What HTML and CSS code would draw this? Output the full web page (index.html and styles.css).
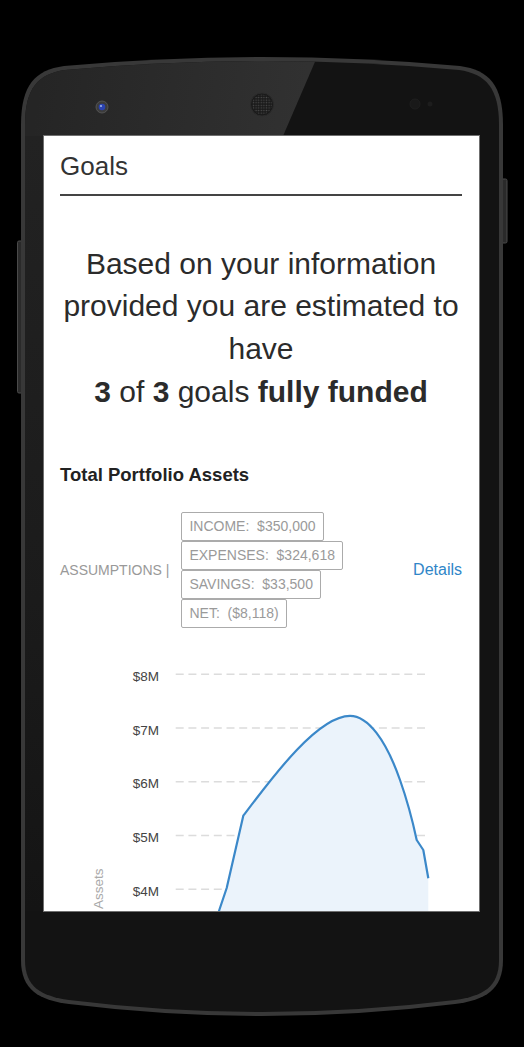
FILE: index.html
```html
<!DOCTYPE html>
<html lang="en">
<head>
<meta charset="utf-8">
<title>Goals</title>
<link rel="stylesheet" href="styles.css">
</head>
<body>
<div class="stage">
  <svg class="shell" viewBox="0 0 524 1047" width="524" height="1047" aria-hidden="true">
    <defs>
      <clipPath id="innerClip">
        <path d="M 25 125 C 25 88, 38 74, 65 70 Q 262 52, 459 70 C 486 74, 499 88, 499 125 L 499 960 C 499 987, 483 996, 455 1000 Q 262 1024, 69 1000 C 41 996, 25 987, 25 960 Z"/>
      </clipPath>
      <linearGradient id="sheen" gradientUnits="userSpaceOnUse" x1="40" y1="80" x2="300" y2="120">
        <stop offset="0" stop-color="#252525"/>
        <stop offset="1" stop-color="#313131"/>
      </linearGradient>
      <linearGradient id="sideShade" gradientUnits="userSpaceOnUse" x1="0" y1="136" x2="0" y2="911">
        <stop offset="0" stop-color="#222"/>
        <stop offset="0.6" stop-color="#1b1b1b"/>
        <stop offset="1" stop-color="#141414"/>
      </linearGradient>
      <pattern id="mesh" width="2.6" height="2.6" patternUnits="userSpaceOnUse">
        <circle cx="1.3" cy="1.3" r="0.75" fill="#4a4a4a"/>
      </pattern>
    </defs>
    <rect x="17.5" y="241" width="6" height="152" rx="1.5" fill="#2a2a2a" stroke="#4a4a4a" stroke-width="1"/>
    <rect x="500.5" y="179" width="6.5" height="64" rx="1.5" fill="#2a2a2a" stroke="#4a4a4a" stroke-width="1"/>
    <path d="M 21 125 C 21 85, 35 70, 64 66 Q 262 48, 460 66 C 489 70, 503 85, 503 125 L 503 960 C 503 990, 485 1000, 455 1004 Q 262 1028, 69 1004 C 39 1000, 21 990, 21 960 Z" fill="#383838"/>
    <path d="M 25 125 C 25 88, 38 74, 65 70 Q 262 52, 459 70 C 486 74, 499 88, 499 125 L 499 960 C 499 987, 483 996, 455 1000 Q 262 1024, 69 1000 C 41 996, 25 987, 25 960 Z" fill="#131313"/>
    <g clip-path="url(#innerClip)">
      <rect x="0" y="136" width="44" height="775" fill="url(#sideShade)"/>
      <polygon points="0,0 341.6,0 283,136 0,136" fill="url(#sheen)"/>
    </g>
    <circle cx="102" cy="107" r="6" fill="#3c3c3c" stroke="#5a5a5a" stroke-width="0.8"/>
    <circle cx="102" cy="107" r="3.3" fill="#2b43b0"/>
    <circle cx="101" cy="106" r="1" fill="#a8b8e8"/>
    <circle cx="262" cy="104.5" r="11.5" fill="#1a1a1a" stroke="#2c2c2c" stroke-width="1"/>
    <circle cx="262" cy="104.5" r="10" fill="url(#mesh)"/>
    <circle cx="415" cy="104" r="5" fill="#191919" stroke="#1f1f1f" stroke-width="1"/>
    <circle cx="430" cy="104" r="2.5" fill="#1d1d1d"/>
  </svg>

  <div class="device">
    <main class="screen">
      <h1 class="page-title">Goals</h1>
      <div class="rule"></div>
      <p class="summary">Based on your information provided you are estimated to have<br><b>3</b> of <b>3</b> goals <b>fully funded</b></p>
      <h2 class="section-title">Total Portfolio Assets</h2>
      <div class="assumptions">
        <span class="assumptions-label">ASSUMPTIONS |</span>
        <div class="chips">
          <span class="chip">INCOME:  $350,000</span>
          <span class="chip">EXPENSES:  $324,618</span>
          <span class="chip">SAVINGS:  $33,500</span>
          <span class="chip">NET:  ($8,118)</span>
        </div>
        <a class="details" href="#">Details</a>
      </div>
      <svg class="chart" viewBox="0 0 402 272" width="402" height="272">
        <g transform="translate(-60 -640)">
          <g class="grid">
            <line x1="175.7" y1="674.3" x2="429" y2="674.3"/>
            <line x1="175.7" y1="728" x2="429" y2="728"/>
            <line x1="175.7" y1="781.8" x2="429" y2="781.8"/>
            <line x1="175.7" y1="835.5" x2="429" y2="835.5"/>
            <line x1="175.7" y1="889.3" x2="429" y2="889.3"/>
          </g>
          <path class="area" d="M 205 960 L 219.3 910 L 226.7 888 L 243.3 815.7 C 274 775, 318 716, 350 715.8 C 368 715.8, 386 740, 400 780 C 406 797, 412 818, 416.7 840 L 423.3 850 L 428.3 878.3 L 428.3 1040 L 200 1040 Z"/>
          <path class="line" d="M 205 960 L 219.3 910 L 226.7 888 L 243.3 815.7 C 274 775, 318 716, 350 715.8 C 368 715.8, 386 740, 400 780 C 406 797, 412 818, 416.7 840 L 423.3 850 L 428.3 878.3"/>
          <g class="ticks">
            <text x="159" y="681">$8M</text>
            <text x="159" y="734.5">$7M</text>
            <text x="159" y="788.3">$6M</text>
            <text x="159" y="842">$5M</text>
            <text x="159" y="895.8">$4M</text>
          </g>
          <text class="axis-title" transform="translate(103.3 909) rotate(-90)">Assets</text>
        </g>
      </svg>
    </main>
  </div>
</div>
</body>
</html>
```

FILE: styles.css
```css
html, body {
  margin: 0;
  padding: 0;
  background: #000;
  overflow: hidden;
}

.stage {
  display: grid;
  width: 524px;
  height: 1047px;
}

.shell,
.device {
  grid-area: 1 / 1;
}

.shell {
  display: block;
}

.device {
  padding: 136px 0 0 44px;
}

.screen {
  display: block;
  box-sizing: border-box;
  width: 435px;
  height: 775px;
  padding: 0 17px 0 16px;
  background: #fff;
  overflow: hidden;
  box-shadow: 0 0 0 1px #6f6f6f;
  font-family: "Liberation Sans", Arial, sans-serif;
  color: #2b2b2b;
}

.page-title {
  margin: 15px 0 0;
  font-size: 26px;
  line-height: 30px;
  font-weight: normal;
  color: #333;
}

.rule {
  height: 2px;
  margin-top: 13px;
  background: #444;
}

.summary {
  margin: 46.75px 0 0;
  font-size: 30px;
  line-height: 42.67px;
  text-align: center;
  color: #2b2b2b;
}

.summary b {
  font-weight: bold;
}

.section-title {
  margin: 51px 0 0;
  font-size: 18.5px;
  line-height: 21px;
  font-weight: bold;
  color: #222;
}

.assumptions {
  display: flex;
  align-items: center;
  margin-top: 26.5px;
}

.assumptions-label {
  font-size: 14px;
  line-height: 16px;
  color: #999;
}

.chips {
  display: flex;
  flex-direction: column;
  align-items: flex-start;
  margin-left: 12px;
}

.chip {
  display: block;
  border: 1px solid #ababab;
  border-radius: 2px;
  padding: 0 7px;
  font-size: 14px;
  line-height: 27px;
  color: #9a9a9a;
  white-space: pre;
}

.details {
  margin-left: auto;
  font-size: 16px;
  line-height: 18px;
  color: #2f86c8;
  text-decoration: none;
}

.chart {
  display: block;
  margin-top: 12px;
}

.grid line {
  stroke: #dcdcdc;
  stroke-width: 1.5;
  stroke-dasharray: 8 4.7;
}

.area {
  fill: #ebf3fb;
}

.line {
  fill: none;
  stroke: #3b88c9;
  stroke-width: 2.2;
  stroke-linejoin: round;
}

.ticks text {
  font-family: "Liberation Sans", Arial, sans-serif;
  font-size: 13.5px;
  fill: #444;
  text-anchor: end;
}

.axis-title {
  font-family: "Liberation Sans", Arial, sans-serif;
  font-size: 13.5px;
  fill: #aaa;
}
```
